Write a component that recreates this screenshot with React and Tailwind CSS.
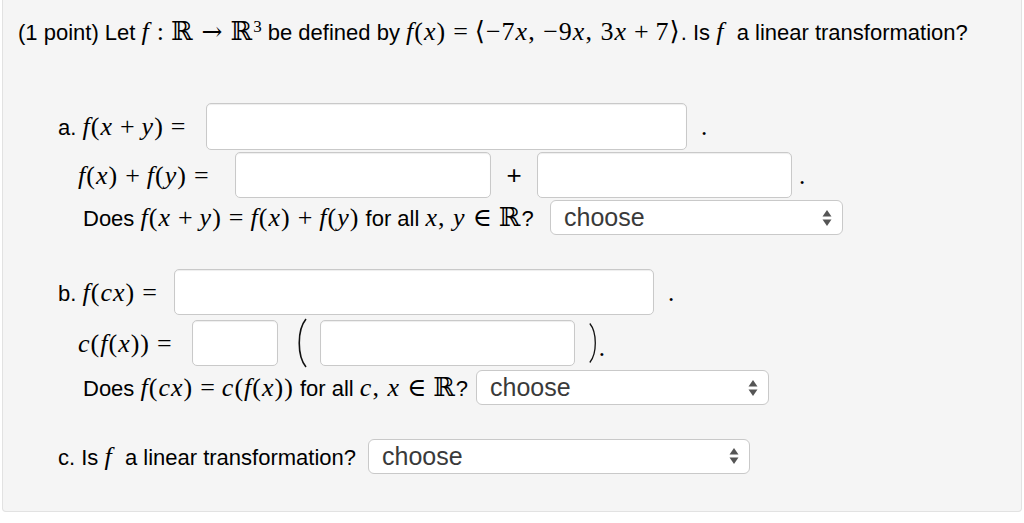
const sans = { fontFamily: '"Liberation Sans", Arial, sans-serif' };
const serif = { fontFamily: '"Liberation Serif", "DejaVu Serif", serif' };
const dejavu = { fontFamily: '"DejaVu Serif", serif' };

const V = ({ children }) => (
  <span className="italic text-[26px] tracking-[1px]" style={serif}>
    {children}
  </span>
);

const S = ({ children, className = "" }) => (
  <span className={"text-[26px] tracking-[1px] " + className} style={serif}>
    {children}
  </span>
);

// operator with TeX-like spacing
const O = ({ children }) => (
  <span className="text-[26px] px-[7px]" style={serif}>
    {children}
  </span>
);

const Field = ({ w, h = "h-[46px]" }) => (
  <div
    className={`${w} ${h} shrink-0 rounded-[5px] border border-[#c9c9c9] bg-white shadow-[inset_0_1px_1px_rgba(0,0,0,0.07)]`}
  />
);

const Choose = ({ w }) => (
  <div
    className={`${w} h-[35px] shrink-0 flex items-center justify-between rounded-[6px] border border-[#c9c9c9] bg-white pl-[13px] pr-[10px]`}
  >
    <span className="text-[25px] text-[#3a3a3a] leading-none" style={sans}>
      choose
    </span>
    <svg width="10" height="18" viewBox="0 0 10 18">
      <path d="M5 1 L9.5 7.5 H0.5 Z" fill="#555" />
      <path d="M5 17 L9.5 10.5 H0.5 Z" fill="#555" />
    </svg>
  </div>
);

const Dot = ({ className = "" }) => (
  <span className={"text-[25px] leading-none " + className} style={serif}>
    .
  </span>
);

export default function App() {
  return (
    <div className="w-[1024px] h-[523px] bg-white" style={sans}>
      <div className="mx-[2px] h-[512px] bg-[#f5f5f5] border-x border-b border-[#e2e2e2] rounded-b-[4px] text-black">
        <div className="pt-[18px] pl-[15px] h-[46px] text-[22px] leading-[28px] whitespace-nowrap">
          (1 point) Let <V>f</V>
          <O>:</O>
          <S>ℝ</S>
          <span className="text-[25px] px-[8px]" style={dejavu}>→</span>
          <S>ℝ</S>
          <sup className="text-[17px]" style={serif}>3</sup> be defined by <V>f</V>
          <S>(</S>
          <V>x</V>
          <S>)</S>
          <O>=</O>
          <S>⟨−7</S>
          <V>x</V>
          <S>, −9</S>
          <V>x</V>
          <S>, 3</S>
          <V>x</V>
          <O>+</O>
          <S>7⟩</S>. Is <V>f</V>&nbsp; a linear transformation?
        </div>

        {/* part a */}
        <div className="mt-[57px] flex flex-col gap-[2px] text-[22px]">
          <div className="flex items-center h-[47px] pl-[55px]">
            <div className="w-[148px] shrink-0 whitespace-nowrap">
              a. <V>f</V>
              <S>(</S>
              <V>x</V>
              <O>+</O>
              <V>y</V>
              <S>)</S>
              <O>=</O>
            </div>
            <Field w="w-[481px]" h="h-[47px]" />
            <Dot className="ml-[14px]" />
          </div>
          <div className="flex items-center h-[46px] pl-[75px]">
            <div className="w-[157px] shrink-0 whitespace-nowrap">
              <V>f</V>
              <S>(</S>
              <V>x</V>
              <S>)</S>
              <O>+</O>
              <V>f</V>
              <S>(</S>
              <V>y</V>
              <S>)</S>
              <O>=</O>
            </div>
            <Field w="w-[256px]" />
            <div className="w-[46px] shrink-0 text-center text-[26px]">+</div>
            <Field w="w-[255px]" />
            <Dot className="ml-[7px]" />
          </div>
          <div className="flex items-center h-[35px] pl-[80px]">
            <div className="w-[467px] shrink-0 whitespace-nowrap">
              Does <V>f</V>
              <S>(</S>
              <V>x</V>
              <O>+</O>
              <V>y</V>
              <S>)</S>
              <O>=</O>
              <V>f</V>
              <S>(</S>
              <V>x</V>
              <S>)</S>
              <O>+</O>
              <V>f</V>
              <S>(</S>
              <V>y</V>
              <S>)</S> for all <V>x</V>
              <S>, </S>
              <V>y</V>
              <O>∈</O>
              <S>ℝ</S>?
            </div>
            <Choose w="w-[293px]" />
          </div>
        </div>

        {/* part b */}
        <div className="mt-[34px] flex flex-col text-[22px]">
          <div className="flex items-center h-[46px] pl-[55px]">
            <div className="w-[116px] shrink-0 whitespace-nowrap">
              b. <V>f</V>
              <S>(</S>
              <V>cx</V>
              <S>)</S>
              <O>=</O>
            </div>
            <Field w="w-[480px]" />
            <Dot className="ml-[14px]" />
          </div>
          <div className="mt-[3px] flex items-center h-[50px] pl-[75px]">
            <div className="w-[114px] shrink-0 whitespace-nowrap">
              <V>c</V>
              <S>(</S>
              <V>f</V>
              <S>(</S>
              <V>x</V>
              <S>))</S>
              <O>=</O>
            </div>
            <Field w="w-[86px]" />
            <div className="w-[42px] shrink-0 flex justify-center pl-[4px]">
              <svg width="12" height="50" viewBox="0 0 12 50">
                <path d="M11 1 C2 12 2 38 11 49" fill="none" stroke="#111" strokeWidth="1.6" />
              </svg>
            </div>
            <Field w="w-[255px]" />
            <div className="w-[30px] shrink-0 flex items-center pl-[14px]">
              <svg width="12" height="50" viewBox="0 0 12 50">
                <path d="M1 1 C10 12 10 38 1 49" fill="none" stroke="#111" strokeWidth="1.6" />
              </svg>
              <Dot className="mt-[8px]" />
            </div>
          </div>
          <div className="mt-[2px] flex items-center h-[35px] pl-[80px]">
            <div className="w-[393px] shrink-0 whitespace-nowrap">
              Does <V>f</V>
              <S>(</S>
              <V>cx</V>
              <S>)</S>
              <O>=</O>
              <V>c</V>
              <S>(</S>
              <V>f</V>
              <S>(</S>
              <V>x</V>
              <S>))</S> for all <V>c</V>
              <S>, </S>
              <V>x</V>
              <O>∈</O>
              <S>ℝ</S>?
            </div>
            <Choose w="w-[293px]" />
          </div>
        </div>

        {/* part c */}
        <div className="mt-[33px] flex items-center h-[36px] pl-[55px] text-[22px]">
          <div className="w-[310px] shrink-0 whitespace-nowrap">
            c. Is <V>f</V>&nbsp; a linear transformation?
          </div>
          <Choose w="w-[382px]" />
        </div>
      </div>
    </div>
  );
}
